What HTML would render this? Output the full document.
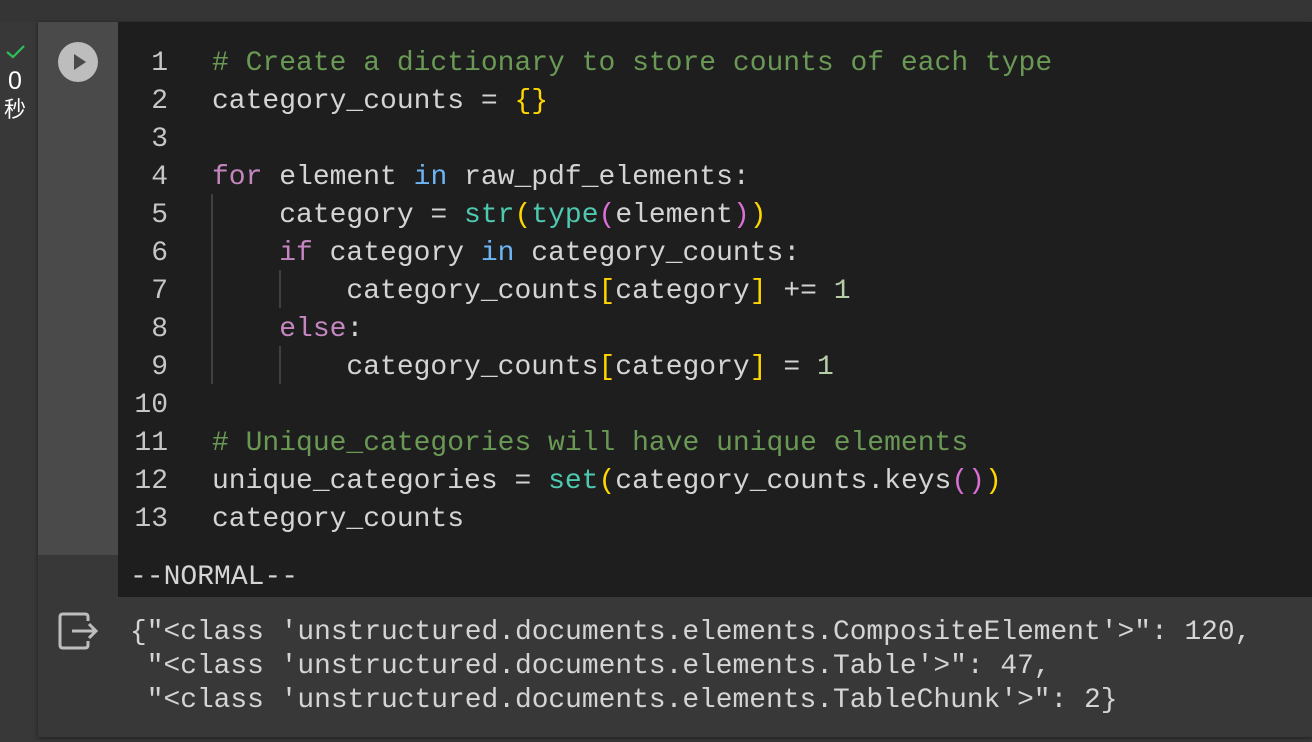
<!DOCTYPE html>
<html><head><meta charset="utf-8"><style>
*{margin:0;padding:0;box-sizing:border-box}
body{width:1312px;height:742px;background:#383838;position:relative;overflow:hidden;font-family:"Liberation Mono",monospace}
.top{position:absolute;left:0;top:0;width:1312px;height:22px;background:#353535}
.cell{position:absolute;left:38px;top:22px;width:1274px;height:715px;background:#383838;box-shadow:0 1px 4px rgba(0,0,0,.5)}
.gut{position:absolute;left:38px;top:22px;width:80px;height:533px;background:#4a4a4a}
.code{position:absolute;left:118px;top:22px;width:1194px;height:575px;background:#1e1e1e}
.ln{position:absolute;font-size:28px;line-height:38px;white-space:pre;color:#d4d4d4}
.num{position:absolute;left:118px;width:50px;text-align:right;color:#c6c6c6;font-size:28px;line-height:38px}
.c{color:#6a9955}.k{color:#c586c0}.b{color:#6cb6f5}.f{color:#4ec9b0}.y{color:#ffd700}.p{color:#da70d6}.n{color:#b5cea8}
.g{position:absolute;width:2px;background:#404040}
.out{position:absolute;left:130px;font-size:27.9px;line-height:34px;white-space:pre;color:#d4d4d4}
</style></head><body>
<div class="top"></div>
<div class="cell"></div>
<div class="gut"></div>
<div class="code"></div>
<svg style="position:absolute;left:5px;top:44px" width="22" height="16"><path d="M2 8 L8 13 L19 2" stroke="#2fbf5a" stroke-width="2.2" fill="none"/></svg>
<div style="position:absolute;left:0;top:67px;width:30px;text-align:center;color:#fff;font-family:'Liberation Sans',sans-serif;font-size:25px;line-height:28px">0</div>
<div style="position:absolute;left:0;top:96px;width:30px;text-align:center;color:#fff;font-family:'Liberation Sans','Noto Sans CJK SC',sans-serif;font-size:22px;line-height:28px">秒</div>
<div style="position:absolute;left:58px;top:42px;width:40px;height:40px;border-radius:50%;background:#bdbdbd"></div>
<svg style="position:absolute;left:58px;top:42px" width="40" height="40"><path d="M16 12 L28 20 L16 28Z" fill="#4a4a4a"/></svg>

<div class="g" style="left:211px;top:194px;height:190px"></div>
<div class="g" style="left:279px;top:270px;height:38px"></div>
<div class="g" style="left:279px;top:346px;height:38px"></div>

<div style="position:absolute;left:0;top:3px;width:1312px;height:600px">
<div class="num" style="top:42px">1</div>
<div class="num" style="top:80px">2</div>
<div class="num" style="top:118px">3</div>
<div class="num" style="top:156px">4</div>
<div class="num" style="top:194px">5</div>
<div class="num" style="top:232px">6</div>
<div class="num" style="top:270px">7</div>
<div class="num" style="top:308px">8</div>
<div class="num" style="top:346px">9</div>
<div class="num" style="top:384px">10</div>
<div class="num" style="top:422px">11</div>
<div class="num" style="top:460px">12</div>
<div class="num" style="top:498px">13</div>

<div class="ln" style="left:212px;top:42px"><span class="c"># Create a dictionary to store counts of each type</span></div>
<div class="ln" style="left:212px;top:80px">category_counts = <span class="y">{}</span></div>
<div class="ln" style="left:212px;top:156px"><span class="k">for</span> element <span class="b">in</span> raw_pdf_elements:</div>
<div class="ln" style="left:212px;top:194px">    category = <span class="f">str</span><span class="y">(</span><span class="f">type</span><span class="p">(</span>element<span class="p">)</span><span class="y">)</span></div>
<div class="ln" style="left:212px;top:232px">    <span class="k">if</span> category <span class="b">in</span> category_counts:</div>
<div class="ln" style="left:212px;top:270px">        category_counts<span class="y">[</span>category<span class="y">]</span> += <span class="n">1</span></div>
<div class="ln" style="left:212px;top:308px">    <span class="k">else</span>:</div>
<div class="ln" style="left:212px;top:346px">        category_counts<span class="y">[</span>category<span class="y">]</span> = <span class="n">1</span></div>
<div class="ln" style="left:212px;top:422px"><span class="c"># Unique_categories will have unique elements</span></div>
<div class="ln" style="left:212px;top:460px">unique_categories = <span class="f">set</span><span class="y">(</span>category_counts.keys<span class="p">()</span><span class="y">)</span></div>
<div class="ln" style="left:212px;top:498px">category_counts</div>
<div class="ln" style="left:130px;top:556px">--NORMAL--</div>
</div>

<svg style="position:absolute;left:58px;top:612px" width="42" height="40"><path d="M27 2 H5 Q2 2 2 5 V33 Q2 36 5 36 H27 Q30 36 30 33 V29 M30 9 V5 Q30 2 27 2" stroke="#bdbdbd" stroke-width="3" fill="none"/><path d="M14 19 H38 M31 12 L38 19 L31 26" stroke="#bdbdbd" stroke-width="3" fill="none"/></svg>
<div class="out" style="top:616px">{"&lt;class 'unstructured.documents.elements.CompositeElement'&gt;": 120,
 "&lt;class 'unstructured.documents.elements.Table'&gt;": 47,
 "&lt;class 'unstructured.documents.elements.TableChunk'&gt;": 2}</div>
</body></html>
